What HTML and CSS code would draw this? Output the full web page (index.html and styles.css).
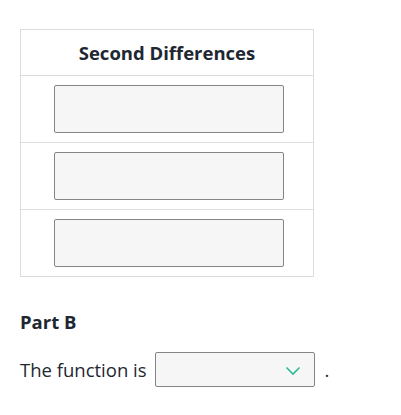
FILE: index.html
```html
<!DOCTYPE html>
<html>
<head>
<meta charset="utf-8">
<link rel="stylesheet" href="styles.css">
</head>
<body>
<div class="page">
  <table class="diff-table">
    <thead>
      <tr><th>Second Differences</th></tr>
    </thead>
    <tbody>
      <tr><td><div class="answer-box"></div></td></tr>
      <tr><td><div class="answer-box"></div></td></tr>
      <tr><td><div class="answer-box"></div></td></tr>
    </tbody>
  </table>
  <h2 class="part-title">Part B</h2>
  <div class="sentence">
    <span class="label">The function is</span>
    <div class="select">
      <svg class="chevron" width="16" height="10" viewBox="0 0 16 10"><path d="M1.5 1.5 L8 8 L14.5 1.5" fill="none" stroke="#2fb894" stroke-width="1.6"/></svg>
    </div>
    <span class="period">.</span>
  </div>
</div>
</body>
</html>
```
FILE: styles.css
```css
html, body {
  margin: 0;
  padding: 0;
  background: #ffffff;
}
body {
  font-family: "Open Sans", "Liberation Sans", sans-serif;
  color: #1e2732;
}
.page {
  padding: 29px 0 0 20px;
}
.diff-table {
  border-collapse: collapse;
  width: 294px;
}
.diff-table th,
.diff-table td {
  border: 1px solid #dcdcdc;
  padding: 0;
}
.diff-table th {
  height: 45px;
  font-size: 18.5px;
  font-weight: 700;
  line-height: 22px;
  text-align: center;
  vertical-align: middle;
}
.diff-table td {
  height: 66px;
  vertical-align: middle;
  padding-left: 33px;
}
.answer-box {
  width: 228px;
  height: 46px;
  border: 1px solid #858585;
  border-radius: 2px;
  background: #f6f6f6;
}
.part-title {
  margin: 33px 0 0 0;
  font-size: 18.5px;
  font-weight: 700;
  line-height: 24px;
}
.sentence {
  display: flex;
  align-items: center;
  margin-top: 18px;
}
.label {
  font-size: 18.5px;
  line-height: 24px;
}
.select {
  margin-left: 8px;
  width: 145px;
  height: 33px;
  border: 1px solid #858585;
  border-radius: 2px;
  background: #f6f6f6;
  display: flex;
  align-items: center;
  justify-content: flex-end;
  padding-right: 13px;
}
.chevron {
  margin-top: 2px;
}
.period {
  margin-left: 10px;
  font-size: 18.5px;
}
```
